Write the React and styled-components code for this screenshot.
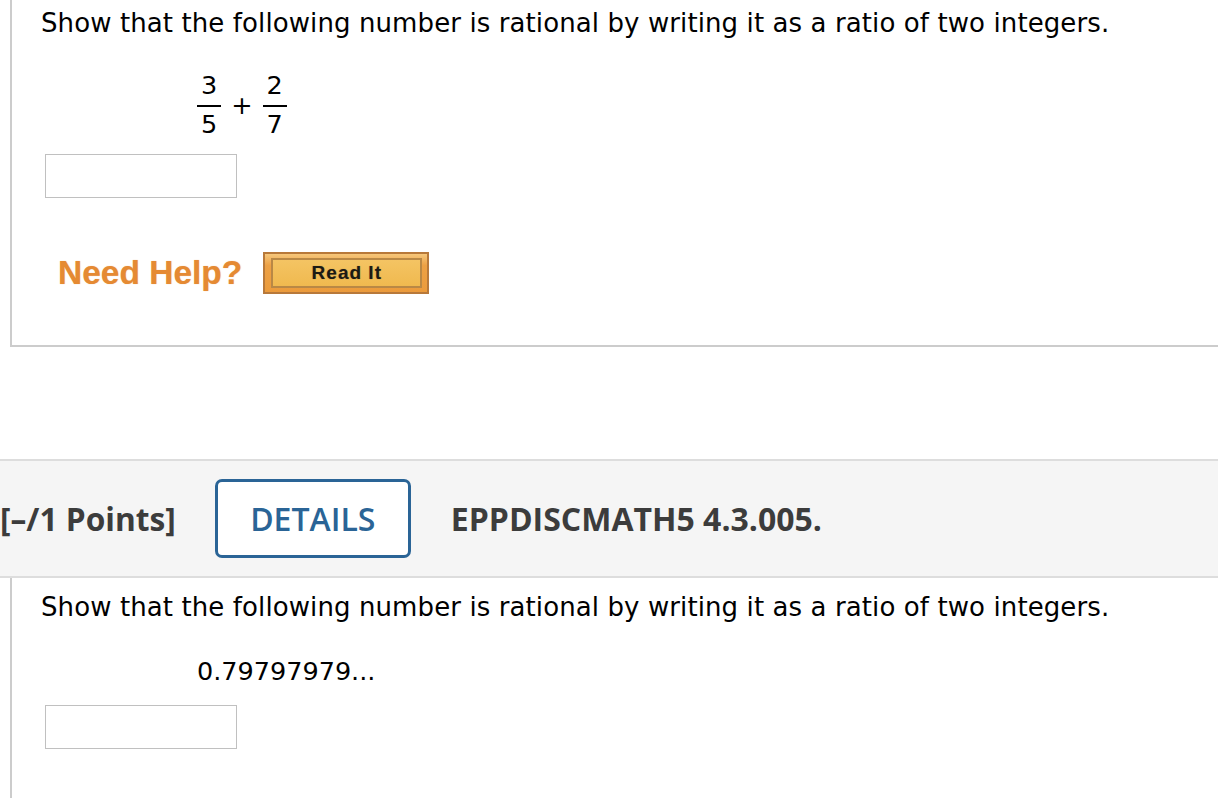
import React from 'react'
import styled, { createGlobalStyle } from 'styled-components'

const Global = createGlobalStyle`
  html, body {
    margin: 0;
    padding: 0;
    background: #fff;
  }
  body {
    font-family: "DejaVu Sans", Verdana, sans-serif;
    overflow: hidden;
  }
`

const Page = styled.div`
  width: 1218px;
  height: 798px;
  overflow: hidden;
`

const QuestionBody = styled.div`
  margin-left: 10px;
  border-left: 2px solid #ccc;
  border-bottom: ${p => (p.$open ? '0' : '2px solid #ccc')};
  padding: ${p => p.$top}px 0 0 29px;
  height: ${p => p.$height}px;
  box-sizing: border-box;
`

const Prompt = styled.p`
  margin: 0;
  font-size: 26px;
  letter-spacing: 0.1px;
  line-height: 32px;
  color: #000;
  white-space: nowrap;
`

const Expr = styled.div`
  display: flex;
  align-items: center;
  gap: 10px;
  margin-top: 33px;
  padding-left: 156px;
  font-size: 25.5px;
  color: #000;
`

const Fraction = styled.span`
  display: inline-flex;
  flex-direction: column;
  align-items: center;
`

const Num = styled.span`
  padding: 0 4px 7px;
  line-height: 26px;
  border-bottom: 2px solid #000;
`

const Den = styled.span`
  line-height: 26px;
  padding-top: 4px;
`

const Decimal = styled.div`
  margin: 32px 0 0 156px;
  font-size: 25.5px;
  line-height: 32px;
  color: #000;
`

const AnswerBox = styled.input`
  display: block;
  width: 192px;
  height: 44px;
  box-sizing: border-box;
  margin: ${p => p.$top}px 0 0 4px;
  border: 1px solid #c0c0c0;
  background: #fff;
  outline: none;
`

const HelpRow = styled.div`
  display: flex;
  align-items: center;
  gap: 21px;
  margin: 54px 0 0 17px;
`

const HelpLabel = styled.span`
  font-family: "Liberation Sans", Arial, sans-serif;
  font-weight: bold;
  font-size: 33.5px;
  color: #e58a33;
  text-shadow: 0 0 1px rgba(229, 138, 51, 0.6);
`

const ReadIt = styled.button`
  width: 166px;
  height: 42px;
  box-sizing: border-box;
  padding: 4px 5px 4px 6px;
  border: 2px solid #b8793a;
  background: linear-gradient(#f6c77b, #eda145 30%, #eb9b3c);
  cursor: pointer;
  display: flex;
`

const ReadItFace = styled.span`
  flex: 1;
  display: flex;
  align-items: center;
  justify-content: center;
  border: 2px solid #b98845;
  background: linear-gradient(#f4c463, #f0b94f);
  font-family: "Liberation Sans", Arial, sans-serif;
  font-weight: bold;
  font-size: 19px;
  letter-spacing: 1px;
  color: #1c1a14;
  text-shadow: 0 0 1px rgba(28, 26, 20, 0.4);
`

const Spacer = styled.div`
  height: 112px;
`

const Header = styled.div`
  display: flex;
  align-items: center;
  height: 119px;
  box-sizing: border-box;
  background: #f5f5f5;
  border-top: 2px solid #ddd;
  border-bottom: 2px solid #ddd;
  font-family: "Open Sans", "Noto Sans", sans-serif;
`

const Points = styled.span`
  font-weight: 700;
  font-size: 31.7px;
  color: #3c3c3c;
  white-space: nowrap;
`

const DetailsButton = styled.button`
  margin-left: 39px;
  width: 196px;
  height: 79px;
  box-sizing: border-box;
  border: 3px solid #2a6496;
  border-radius: 7px;
  background: #fff;
  font-family: "Open Sans", "Noto Sans", sans-serif;
  font-weight: 600;
  font-size: 32px;
  color: #2a6496;
  cursor: pointer;
`

const Code = styled.span`
  margin-left: 40px;
  font-weight: 700;
  font-size: 32px;
  color: #3c3c3c;
`

export default function App() {
  return (
    <Page>
      <Global />
      <QuestionBody $top={7} $height={347}>
        <Prompt>Show that the following number is rational by writing it as a ratio of two integers.</Prompt>
        <Expr>
          <Fraction>
            <Num>3</Num>
            <Den>5</Den>
          </Fraction>
          +
          <Fraction>
            <Num>2</Num>
            <Den>7</Den>
          </Fraction>
        </Expr>
        <AnswerBox $top={17} />
        <HelpRow>
          <HelpLabel>Need Help?</HelpLabel>
          <ReadIt>
            <ReadItFace>Read It</ReadItFace>
          </ReadIt>
        </HelpRow>
      </QuestionBody>
      <Spacer />
      <Header>
        <Points>[–/1 Points]</Points>
        <DetailsButton>DETAILS</DetailsButton>
        <Code>EPPDISCMATH5 4.3.005.</Code>
      </Header>
      <QuestionBody $open $top={13} $height={240}>
        <Prompt>Show that the following number is rational by writing it as a ratio of two integers.</Prompt>
        <Decimal>0.79797979...</Decimal>
        <AnswerBox $top={18} />
      </QuestionBody>
    </Page>
  )
}
